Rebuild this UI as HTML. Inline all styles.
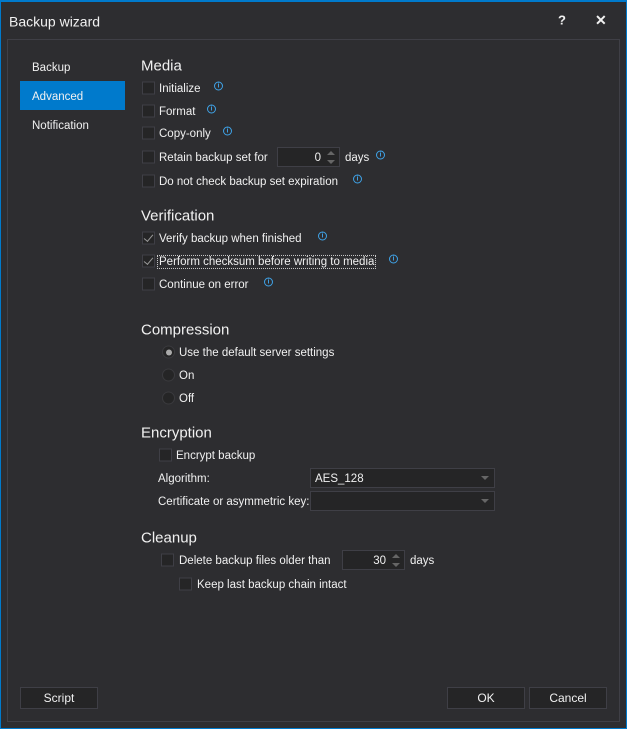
<!DOCTYPE html>
<html><head><style>
*{margin:0;padding:0;box-sizing:border-box}
body{width:627px;height:729px;background:#2d2d30;font-family:"Liberation Sans",sans-serif;font-size:11.5px;color:#f1f1f1;position:relative;overflow:hidden}
.win{position:absolute;left:0;top:0;width:627px;height:729px;border:1px solid #007acc;border-top:2px solid #007acc}
.a{position:absolute;white-space:nowrap}
.t{transform:translateY(-42%)}
.panel{position:absolute;left:7px;top:39px;width:613px;height:683px;border:1px solid #3f3f46}
.h{position:absolute;font-size:15px;color:#f1f1f1;transform:translateY(-45%)}
.cb{position:absolute;width:13px;height:13px;border:1px solid #3f3f46;background:#252526;transform:translateY(-50%);margin-left:-1px}
.cb.k::after{content:"";position:absolute;left:3px;top:0px;width:4px;height:8px;border:solid #9a9a9a;border-width:0 1.5px 1.5px 0;transform:rotate(40deg)}
.rd{position:absolute;width:13px;height:13px;border-radius:50%;border:1px solid #3a3a3e;background:#252526;transform:translateY(-50%)}
.rd.k::after{content:"";position:absolute;left:2.5px;top:2.5px;width:6px;height:6px;border-radius:50%;background:#aaa}
.i{position:absolute;width:9px;height:9px;border:1px solid #3fa3e8;border-radius:50%;transform:translateY(-50%);font-size:7px;color:#3fa3e8;text-align:center;line-height:7px;font-weight:bold}
.box{position:absolute;background:#252526;border:1px solid #3f3f46}
.btn{position:absolute;background:#252526;border:1px solid #3f3f46;text-align:center;line-height:20px;font-size:12px}
.arr{position:absolute;right:5px;top:7px;width:0;height:0;border-left:4px solid transparent;border-right:4px solid transparent;border-top:4px solid #666}
.sp{position:absolute;right:4px;width:0;height:0;border-left:4px solid transparent;border-right:4px solid transparent}
</style></head><body>
<div class="win"></div>
<div class="a t" style="left:9px;top:20px;font-size:14px">Backup wizard</div>
<div class="a t" style="left:558px;top:19px;font-size:13px;font-weight:bold">?</div>
<div class="a t" style="left:595px;top:19px;font-size:14px;font-weight:bold">✕</div>
<div class="panel"></div>
<div class="a t" style="left:32px;top:67px">Backup</div>
<div class="a" style="left:20px;top:81px;width:105px;height:29px;background:#007acc"></div>
<div class="a t" style="left:32px;top:96px">Advanced</div>
<div class="a t" style="left:32px;top:125px">Notification</div>

<div class="h" style="left:141px;top:65px">Media</div>
<div class="cb" style="left:143px;top:88px"></div><div class="a t" style="left:159px;top:88px">Initialize</div><div class="i" style="left:214px;top:86px">i</div>
<div class="cb" style="left:143px;top:111px"></div><div class="a t" style="left:159px;top:111px">Format</div><div class="i" style="left:207px;top:109px">i</div>
<div class="cb" style="left:143px;top:133px"></div><div class="a t" style="left:159px;top:133px">Copy-only</div><div class="i" style="left:223px;top:131px">i</div>
<div class="cb" style="left:143px;top:157px"></div><div class="a t" style="left:159px;top:157px">Retain backup set for</div>
<div class="box" style="left:277px;top:147px;width:63px;height:20px"><span class="a t" style="right:18px;top:9px">0</span><div class="sp" style="top:3px;border-bottom:4px solid #666"></div><div class="sp" style="top:12px;border-top:4px solid #666"></div></div>
<div class="a t" style="left:345px;top:157px">days</div><div class="i" style="left:376px;top:155px">i</div>
<div class="cb" style="left:143px;top:181px"></div><div class="a t" style="left:159px;top:181px">Do not check backup set expiration</div><div class="i" style="left:353px;top:179px">i</div>

<div class="h" style="left:141px;top:215px">Verification</div>
<div class="cb k" style="left:143px;top:238px"></div><div class="a t" style="left:159px;top:238px">Verify backup when finished</div><div class="i" style="left:318px;top:236px">i</div>
<div class="cb k" style="left:143px;top:261px"></div><div class="a t" style="left:158px;top:261px;outline:1px dotted #ccc;padding:0 1px">Perform checksum before writing to media</div><div class="i" style="left:389px;top:259px">i</div>
<div class="cb" style="left:143px;top:284px"></div><div class="a t" style="left:159px;top:284px">Continue on error</div><div class="i" style="left:264px;top:282px">i</div>

<div class="h" style="left:141px;top:329px">Compression</div>
<div class="rd k" style="left:162px;top:352px"></div><div class="a t" style="left:179px;top:352px">Use the default server settings</div>
<div class="rd" style="left:162px;top:375px"></div><div class="a t" style="left:179px;top:375px">On</div>
<div class="rd" style="left:162px;top:398px"></div><div class="a t" style="left:179px;top:398px">Off</div>

<div class="h" style="left:141px;top:432px">Encryption</div>
<div class="cb" style="left:160px;top:455px"></div><div class="a t" style="left:176px;top:455px">Encrypt backup</div>
<div class="a t" style="left:158px;top:478px">Algorithm:</div>
<div class="box" style="left:310px;top:468px;width:185px;height:20px"><span class="a t" style="left:4px;top:9px">AES_128</span><div class="arr"></div></div>
<div class="a t" style="left:158px;top:501px">Certificate or asymmetric key:</div>
<div class="box" style="left:310px;top:491px;width:185px;height:20px"><div class="arr"></div></div>

<div class="h" style="left:141px;top:537px">Cleanup</div>
<div class="cb" style="left:162px;top:560px"></div><div class="a t" style="left:179px;top:560px">Delete backup files older than</div>
<div class="box" style="left:342px;top:550px;width:63px;height:20px"><span class="a t" style="right:18px;top:9px">30</span><div class="sp" style="top:3px;border-bottom:4px solid #666"></div><div class="sp" style="top:12px;border-top:4px solid #666"></div></div>
<div class="a t" style="left:410px;top:560px">days</div>
<div class="cb" style="left:180px;top:584px"></div><div class="a t" style="left:197px;top:584px">Keep last backup chain intact</div>

<div class="btn" style="left:20px;top:687px;width:78px;height:22px">Script</div>
<div class="btn" style="left:447px;top:687px;width:78px;height:22px">OK</div>
<div class="btn" style="left:529px;top:687px;width:78px;height:22px">Cancel</div>
</body></html>
